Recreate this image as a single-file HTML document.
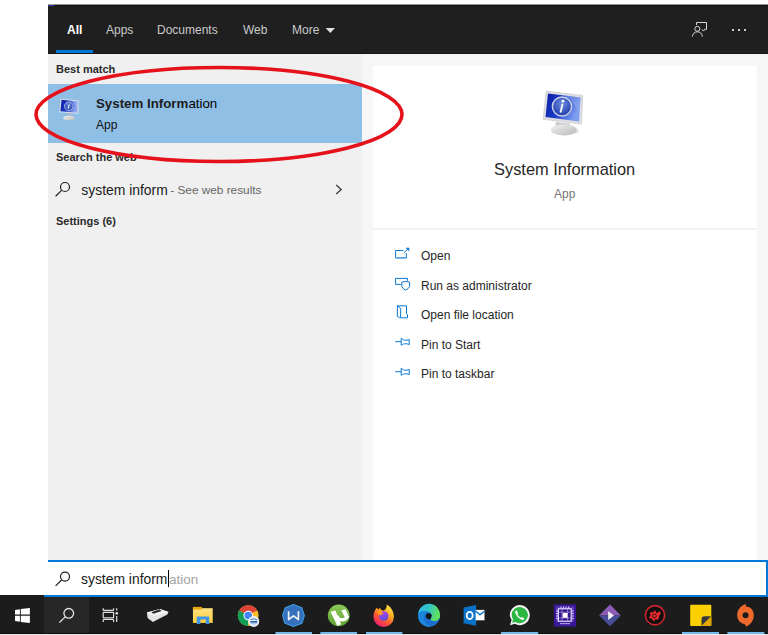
<!DOCTYPE html>
<html><head><meta charset="utf-8">
<style>
*{margin:0;padding:0;box-sizing:border-box}
html,body{width:768px;height:635px;overflow:hidden;background:#fff;font-family:"Liberation Sans",sans-serif;position:relative}
.a{position:absolute}
.t{position:absolute;white-space:pre;line-height:1}
svg{position:absolute;overflow:visible}
</style></head><body>

<!-- top tab bar -->
<div class="a" style="left:48px;top:4px;width:720px;height:50px;background:#1f1f1f"></div>
<div class="a" style="left:48px;top:4px;width:720px;height:1px;background:#9a9a9a"></div>
<div class="a" style="left:48px;top:5px;width:720px;height:1px;background:#0e0e0e"></div>
<div class="a" style="left:48px;top:5px;width:6px;height:1px;background:#3b3bb8"></div>
<div class="a" style="left:48px;top:53px;width:720px;height:1px;background:#161616"></div>
<div class="t" style="left:67px;top:24px;font-size:12px;font-weight:bold;color:#fff">All</div>
<div class="t" style="left:106px;top:24px;font-size:12px;color:#c9c9c9">Apps</div>
<div class="t" style="left:157px;top:24px;font-size:12px;color:#c9c9c9">Documents</div>
<div class="t" style="left:243px;top:24px;font-size:12px;color:#c9c9c9">Web</div>
<div class="t" style="left:292px;top:24px;font-size:12px;color:#c9c9c9">More</div>
<svg style="left:326px;top:28px" width="9" height="5"><path d="M-0.4 0.1H9L4.3 5Z" fill="#e0e0e0"/></svg>
<div class="a" style="left:56px;top:50px;width:37px;height:3px;background:#0078d7"></div>

<div class="a" style="left:732px;top:29px;width:2px;height:2px;background:#ccc"></div>
<div class="a" style="left:738px;top:29px;width:2px;height:2px;background:#ccc"></div>
<div class="a" style="left:744px;top:29px;width:2px;height:2px;background:#ccc"></div>

<!-- left panel -->
<div class="a" style="left:48px;top:54px;width:314px;height:506px;background:#f0f0f0"></div>
<!-- right area -->
<div class="a" style="left:362px;top:54px;width:406px;height:506px;background:#f6f6f6"></div>
<div class="a" style="left:373px;top:66px;width:384px;height:494px;background:#fff"></div>
<div class="a" style="left:373px;top:228px;width:384px;height:2px;background:#f3f3f3"></div>

<!-- search box -->
<div class="a" style="left:48px;top:560px;width:720px;height:2px;background:#0078d7"></div>
<div class="a" style="left:766px;top:560px;width:2px;height:37px;background:#0078d7"></div>

<!-- taskbar -->
<div class="a" style="left:0;top:595px;width:768px;height:40px;background:#1c1c1c"></div>
<div class="a" style="left:44px;top:597px;width:45px;height:38px;background:#272727"></div>
<div class="a" style="left:44px;top:595px;width:724px;height:2px;background:#0078d7"></div>


<!-- left panel text -->
<div class="t" style="left:56px;top:64px;font-size:11px;font-weight:bold;color:#2a2a2a">Best match</div>
<div class="a" style="left:48px;top:84px;width:314px;height:59px;background:#90bfe6"></div>
<div class="t" style="left:96px;top:97px;font-size:13.3px;color:#000"><b style="color:#1e1e1e">System Inform</b>ation</div>
<div class="t" style="left:96px;top:119px;font-size:12px;color:#111">App</div>
<div class="t" style="left:56px;top:152px;font-size:11px;font-weight:bold;color:#2a2a2a">Search the web</div>
<div class="t" style="left:81.3px;top:184px;font-size:13.9px;color:#1a1a1a">system inform</div>
<div class="t" style="left:170.3px;top:185px;font-size:11.8px;color:#666">- See web results</div>
<div class="t" style="left:56px;top:216px;font-size:11px;font-weight:bold;color:#2a2a2a">Settings (6)</div>

<!-- right card text -->
<div class="t" style="left:494px;top:161px;font-size:16.4px;color:#262626">System Information</div>
<div class="t" style="left:554px;top:188px;font-size:12px;color:#767676">App</div>
<div class="t" style="left:421px;top:250px;font-size:12px;color:#262626">Open</div>
<div class="t" style="left:421px;top:280px;font-size:12px;color:#262626">Run as administrator</div>
<div class="t" style="left:421px;top:309px;font-size:12px;color:#262626">Open file location</div>
<div class="t" style="left:421px;top:339px;font-size:12px;color:#262626">Pin to Start</div>
<div class="t" style="left:421px;top:368px;font-size:12px;color:#262626">Pin to taskbar</div>

<!-- search box text -->
<div class="a" style="left:168px;top:570px;width:1px;height:17px;background:#000"></div>
<div class="t" style="left:81px;top:573px;font-size:13.9px;color:#1a1a1a">system inform</div>
<div class="t" style="left:169px;top:573px;font-size:13.5px;color:#a4a4a4">ation</div>

<svg style="left:0;top:0" width="768" height="635" viewBox="0 0 768 635">
<defs>
<linearGradient id="scr" x1="0" y1="0" x2="1" y2="0.3"><stop offset="0" stop-color="#0b1aa8"/><stop offset="0.55" stop-color="#1d3fc4"/><stop offset="1" stop-color="#8fa8f0"/></linearGradient>
<linearGradient id="scr2" x1="0" y1="0" x2="1" y2="0.4"><stop offset="0" stop-color="#0a1aa0"/><stop offset="0.5" stop-color="#1a3cc8"/><stop offset="1" stop-color="#7e9ef0"/></linearGradient>
<radialGradient id="cir" cx="0.5" cy="0.35" r="0.65"><stop offset="0" stop-color="#6d8de0"/><stop offset="1" stop-color="#1d3aa8"/></radialGradient>
<linearGradient id="stand" x1="0" y1="0" x2="1" y2="1"><stop offset="0" stop-color="#f4f4f4"/><stop offset="1" stop-color="#b8b8b8"/></linearGradient>
<linearGradient id="edge" x1="0" y1="1" x2="1" y2="0"><stop offset="0" stop-color="#0c59a8"/><stop offset="0.5" stop-color="#1f8ad9"/><stop offset="1" stop-color="#5fd55e"/></linearGradient>
<linearGradient id="ff" x1="0.8" y1="0" x2="0.2" y2="1"><stop offset="0" stop-color="#ffe84a"/><stop offset="0.35" stop-color="#ffb020"/><stop offset="0.62" stop-color="#ff5a2e"/><stop offset="0.92" stop-color="#f0206e"/></linearGradient>
<linearGradient id="fold" x1="0" y1="0" x2="0" y2="1"><stop offset="0" stop-color="#ffe082"/><stop offset="1" stop-color="#ffcf3e"/></linearGradient>
<linearGradient id="ffp" x1="0.3" y1="0" x2="0.5" y2="1"><stop offset="0" stop-color="#b040f0"/><stop offset="1" stop-color="#5a50d8"/></linearGradient>
<linearGradient id="edg2" x1="0" y1="0" x2="1" y2="0.3"><stop offset="0" stop-color="#34b8f0"/><stop offset="0.5" stop-color="#2ec4c8"/><stop offset="1" stop-color="#62e05a"/></linearGradient>
<linearGradient id="ut" x1="0" y1="0" x2="0" y2="1"><stop offset="0" stop-color="#8cc85a"/><stop offset="1" stop-color="#5ea52e"/></linearGradient>
</defs>

<!-- small sysinfo icon -->
<polygon points="60.6,98.7 78.8,100.6 78.5,113.8 59.2,112.2" fill="#d8dde6"/>
<polygon points="61.6,99.8 77.7,101.6 77.4,112.8 60.4,111.3" fill="url(#scr)"/>
<polygon points="68,100.5 77.7,101.6 77.5,108 72,101.5" fill="#b0c4f8" opacity="0.5"/>
<circle cx="68.8" cy="106.2" r="4.3" fill="url(#cir)" stroke="#c8d2ee" stroke-width="0.8"/>
<path d="M69.3 103.8v0.6M68.9 105.3l-0.5 3.4" stroke="#fff" stroke-width="1"/>
<path d="M67 113 L72 113.5 L72.3 115.5 L66.8 115.5Z" fill="#a9b9cc"/>
<ellipse cx="69" cy="118" rx="5.8" ry="2.3" fill="url(#stand)"/>

<!-- big sysinfo icon -->
<polygon points="546.1,91.1 582.7,95.5 581.4,124.1 543.1,119.3" fill="#dcdde2" stroke="#c2c4cc" stroke-width="0.6"/>
<polygon points="548,93.5 580.5,97.5 579,121.5 545.5,117" fill="url(#scr2)"/>
<polygon points="561,95.1 580.5,97.5 579.6,112 570,99" fill="#9db4f4" opacity="0.45"/>
<circle cx="562" cy="106.5" r="9.6" fill="url(#cir)" stroke="#c9d0e6" stroke-width="1.5"/>
<circle cx="562.9" cy="101.2" r="1.4" fill="#fff"/>
<path d="M562.4 104.4 L560.7 111.8" stroke="#f2f2f2" stroke-width="2" stroke-linecap="round"/>
<path d="M556 122 L570 123.8 L571 128 L555 127Z" fill="#c9c9c9"/>
<ellipse cx="563.8" cy="129.9" rx="13" ry="5.6" fill="url(#stand)"/>
<ellipse cx="574" cy="131" rx="5" ry="2.5" fill="#c8c8c8" opacity="0.5"/>

<!-- red ellipse -->
<ellipse cx="219" cy="114.5" rx="183" ry="47" fill="none" stroke="#e5121c" stroke-width="3.6"/>

<!-- search icons -->
<g fill="none" stroke="#1e1e1e" stroke-width="1.2">
<circle cx="65" cy="187" r="4.5"/><path d="M61.6 190.4L55.6 196.3"/>
<circle cx="65" cy="576.6" r="4.5"/><path d="M61.6 580L55.6 585.9"/>
<path d="M336.2 185L341.2 189.5L336.2 194" stroke="#333"/>
</g>
<g fill="none" stroke="#e2e2e2" stroke-width="1.3">
<circle cx="68.75" cy="613.35" r="4.85"/><path d="M65.2 616.9L59.4 622.5"/>
</g>

<!-- feedback icon -->
<g fill="none" stroke="#d6d6d6" stroke-width="1">
<path d="M696.5 25V22.5H706.5V29.3H704.5"/><path d="M702 29.3l1.5 1.8l1.3-1.7"/>
<circle cx="697.3" cy="28.8" r="2.5"/><path d="M692.4 36.6C692.8 33.5 694.7 31.8 697.4 31.8S702 33.5 702.4 36.6"/>
</g>

<!-- action icons -->
<g fill="none" stroke="#0a78d6" stroke-width="1">
<path d="M403.4 250.5H395.6V257.8H406.4V253.3"/><path d="M404.2 252.6L407.8 249"/>
<path d="M400.9 284.4H395.6V278.4H407.5V280.7"/>
<path d="M401.8 282.1Q405.7 280.8 409.6 282.1V286.3Q408.8 288.8 405.6 290.2Q402.4 288.8 401.8 286.3Z"/>
<path d="M397.4 305.8H406.5V313.7L407.5 314.6V317.8H400.6M397.4 305.8V316.4L399.5 317.6L400.6 317.6V313L400.8 308.4L397.4 305.8"/>
<path d="M395.2 341.7H401.2M401.2 338.3V345.2M401.2 338.3C402.5 338.3 402.8 340.2 404.5 340.2H407C408 340.2 408.5 339.4 409.2 339.4V344.6C408.5 344.6 408 343.8 407 343.8H404.5C402.8 343.8 402.5 345.2 401.2 345.2"/>
<path d="M395.2 371.7H401.2M401.2 368.3V375.2M401.2 368.3C402.5 368.3 402.8 370.2 404.5 370.2H407C408 370.2 408.5 369.4 409.2 369.4V374.6C408.5 374.6 408 373.8 407 373.8H404.5C402.8 373.8 402.5 375.2 401.2 375.2"/>
</g>
<path d="M406.3 248.1H408.9V250.7Z" fill="#0a78d6" stroke="#0a78d6" stroke-width="0.8"/>
<path d="M395.6 257.8H406.4" stroke="#5aa6e6" stroke-width="1.6"/>

<!-- taskbar icons -->
<g fill="#fff">
<polygon points="15,609.9 19.9,609.2 19.9,614.6 15,614.6"/>
<polygon points="20.8,609 29.9,607.9 29.9,614.6 20.8,614.6"/>
<polygon points="15,615.8 19.9,615.8 19.9,621.8 15,621"/>
<polygon points="20.8,615.8 29.9,615.8 29.9,622.9 20.8,621.9"/>
</g>
<g fill="none" stroke="#e0e0e0" stroke-width="1.2">
<path d="M103.2 608.2V609.7Q103.2 610.4 103.9 610.4H112.9Q113.6 610.4 113.6 609.7V608.2"/>
<rect x="103.2" y="612.3" width="10.4" height="5.5" rx="0.6"/>
<path d="M103.2 622V620.2Q103.2 619.5 103.9 619.5H112.9Q113.6 619.5 113.6 620.2V622"/>
<path d="M116.7 608.2V610.5M116.7 616V622"/>
</g>
<rect x="115.6" y="612.2" width="2.3" height="2.2" fill="#f0f0f0"/>
<!-- printer -->
<polygon points="146.9,612.4 160,609.1 168.5,612 167.4,614.6 152.8,621.9 147.6,617.9" fill="#e4e4e4"/>
<polygon points="146.9,612.4 160,609.1 168.5,612 154,616" fill="#f6f6f6"/>
<polygon points="151.2,612.3 159.6,609.2 161.6,610.9 153.6,613.8" fill="#2e2e2e"/>
<!-- explorer -->
<rect x="192.95" y="606.95" width="8.9" height="2.8" fill="#e8a800"/>
<rect x="192.95" y="608.2" width="19.75" height="14.7" fill="url(#fold)"/>
<rect x="192.95" y="606.95" width="8.9" height="2.6" fill="#e9a90a"/>
<path d="M196.75 623.9V617.5Q196.75 616.5 197.75 616.5H208.2Q209.2 616.5 209.2 617.5V623.9H205.9V619.6H200.4V623.9Z" fill="#3d97e6"/>
<!-- chrome -->
<circle cx="248.2" cy="615.6" r="10.4" fill="#fbc02d"/>
<path d="M248.2 615.6L239.2 610.4A10.4 10.4 0 0 1 257.2 610.4Z" fill="#db4437"/>
<path d="M248.2 615.6L239.2 610.4A10.4 10.4 0 0 0 248.2 626Z" fill="#0f9d58"/>
<circle cx="248.2" cy="615.6" r="4.8" fill="#fff"/>
<circle cx="248.2" cy="615.6" r="3.8" fill="#4285f4"/>
<circle cx="253.75" cy="621.4" r="5.5" fill="#f2f2f2"/>
<circle cx="253.75" cy="621.4" r="4.5" fill="#e4eef8"/>
<path d="M250.5 619.8Q253.75 617.5 257 619.8" stroke="#3a7ac8" stroke-width="1" fill="none"/>
<rect x="250.3" y="621" width="7" height="1.6" fill="#2a5aa8"/>
<rect x="250.8" y="623.3" width="6" height="0.9" fill="#8ab4e0"/>
<!-- W -->
<polygon points="293.5,604.6 301.7,607.8 304.4,615.5 302,623.2 293.5,626.4 284.6,622.9 282.6,615.1 285.3,607.8" fill="#3570bd" stroke="#3d9ee0" stroke-width="1.1" stroke-linejoin="round"/>
<path d="M288.6 611.2V619.6L293.5 615.8L298.4 619.6V611.2" fill="none" stroke="#f4f4f4" stroke-width="1.7" stroke-linejoin="round"/>
<!-- utorrent -->
<circle cx="338.75" cy="615.4" r="10.9" fill="url(#ut)"/>
<path d="M330.6 611.8L335.4 610.6L341.2 624.2L337.3 626Z" fill="#fff"/>
<path d="M341.4 610.2L345.5 609.2L349 617L345.5 619Z" fill="#fff"/>
<path d="M336.5 617.5Q338.5 622 343 621.5Q347 621 349 617L346.5 615.8Q345 618 342 618.2Q339 618.2 338 614.5Z" fill="#fff"/>
<!-- firefox -->
<path d="M376.6 607.8C374.6 610.5 373.5 613.5 373.5 616.8A10.2 10.2 0 0 0 393.9 616.8C393.9 611.5 391 606.5 386.6 604.4C387.2 607 385.8 609.5 383.5 610.8L381 609.8L379.8 607.7L378.4 609.6Z" fill="url(#ff)"/>
<circle cx="383.7" cy="616" r="4.8" fill="url(#ffp)"/>
<path d="M376.5 612.5Q380 610.5 384 613.2Q381.5 614.2 380.5 615.5Q378 614 376.5 612.5Z" fill="#ff9a1f"/>
<!-- edge -->
<circle cx="429.1" cy="615.7" r="11" fill="#1a6fcf"/>
<path d="M418.2 613.5A11 11 0 0 1 440.1 615.5C440.1 619 437.5 621 434 621C431 621 429.6 619.5 430.9 618C432.3 616.5 432.2 612.5 428 611.8C423.5 611 419.8 612 418.2 613.5Z" fill="url(#edg2)"/>
<path d="M418.3 614C420 610.5 426 610 428.5 612C424 612.5 422.5 618 425.5 622.5C427 624.5 429 625.8 431 626.6A11 11 0 0 1 418.3 614Z" fill="#1b86dc"/>
<path d="M425.8 615.5C426.2 612.5 431 612.5 431.8 615.5C431.5 617 430.5 617.5 430.9 619C428 620 425.5 618 425.8 615.5Z" fill="#141414"/>
<!-- outlook -->
<path d="M463.6 607.5L476.1 605V625.8L463.6 623.2Z" fill="#0a72c9"/>
<rect x="475.6" y="609.9" width="8.9" height="10.4" fill="#fff"/>
<path d="M475.6 611L480 614.8L484.5 611" stroke="#0a72c9" stroke-width="1.4" fill="none"/>
<ellipse cx="469.7" cy="615.4" rx="3" ry="3.6" fill="none" stroke="#fff" stroke-width="1.8"/>
<!-- whatsapp -->
<path d="M510 625.2L511.6 620Q509.8 617.5 509.8 615.1A10 10 0 1 1 514.8 623.8Z" fill="#f4f4f4"/>
<path d="M512 622.8L513.1 619.6Q511.7 617.5 511.7 615.1A8.1 8.1 0 1 1 515.4 621.9Z" fill="#2cb742"/>
<path d="M515.8 610.5Q514.8 611.5 515.5 613.5Q517 617.5 521 619.5Q523 620.4 524 619.3L524.3 618.3L522 617L520.9 617.8Q518.5 616.5 517.3 614.3L518 613.2L516.8 610.6Z" fill="#fff"/>
<!-- cpu -->
<rect x="553.9" y="604.4" width="22.1" height="22.2" fill="#3a1698"/>
<rect x="556" y="606.5" width="18" height="15.5" fill="#9a80e0" opacity="0.35"/>
<path d="M556 611h2.2M556 613.5h2.2M556 616h2.2M556 618.5h2.2M571.5 611h2.2M571.5 613.5h2.2M571.5 616h2.2M571.5 618.5h2.2M561 606.4v2.2M563.5 606.4v2.2M566 606.4v2.2M568.5 606.4v2.2" stroke="#d8ccff" stroke-width="0.9"/>
<rect x="558.4" y="608.8" width="12.8" height="12.4" fill="#2c1080" stroke="#e4dcff" stroke-width="1.2"/>
<path d="M559 612.2h11.8M559 618h11.8M562 609v11.8M567.6 609v11.8" stroke="#a894e8" stroke-width="0.8"/>
<rect x="562.7" y="613" width="4.8" height="4.8" fill="#fff"/>
<rect x="560" y="623" width="10" height="1.2" fill="#c8b8f0" opacity="0.8"/>
<!-- stremio diamond -->
<path d="M599.1 615.4L610 604.5L620.9 615.4Z" fill="#8d5cb6"/>
<path d="M599.1 615.4L610 626.3L620.9 615.4Z" fill="#474e95"/>
<path d="M608.2 611.2V620L614 615.4Z" fill="#f4f4f4"/>
<!-- driver booster -->
<circle cx="655" cy="615.2" r="9.6" fill="#0f0f0f" stroke="#c8242a" stroke-width="1.7"/>
<path d="M654.20 610.60 L655.55 610.78 L656.10 612.51 L656.89 613.11 L658.70 613.20 L659.22 614.45 L658.00 615.80 L657.87 616.78 L658.70 618.40 L657.88 619.48 L656.10 619.09 L655.18 619.47 L654.20 621.00 L652.85 620.82 L652.30 619.09 L651.51 618.49 L649.70 618.40 L649.18 617.15 L650.40 615.80 L650.53 614.82 L649.70 613.20 L650.52 612.12 L652.30 612.51 L653.22 612.13Z" fill="#ec2a30"/>
<circle cx="654.4" cy="615.9" r="1.9" fill="none" stroke="#0f0f0f" stroke-width="0.8"/>
<path d="M656.8 613.5L659.5 611L660.5 612.8L661.2 613.5L659.8 614.5Q659.5 618 656 620.5Q658.5 617 657.5 614.8Z" fill="#ec2a30"/>
<!-- sticky notes -->
<rect x="690.2" y="604.8" width="21.1" height="21.2" rx="1" fill="#fcd000"/>
<path d="M701.5 626V619Q701.5 616.2 704.3 616.2H711.3L701.5 626Z" fill="#3a3a3a"/>
<path d="M701.6 626L711.3 616.3V625Q711.3 626 710.3 626Z" fill="#e0a800"/>
<!-- origin -->
<path d="M746 604C740 606 737.2 610 737.2 615.2C737.2 620 740.5 623.5 744.5 623.9L746.2 626.4C750.5 624.5 753.8 620.5 753.8 615.2C753.8 610 750 606.6 745.8 606.6Z" fill="#ee6a2c"/>
<circle cx="745.5" cy="615.2" r="3" fill="#1c1c1c"/>

<!-- taskbar underlines -->
<rect x="0" y="633" width="768" height="1" fill="#0c0c0c"/><rect x="0" y="634" width="768" height="1" fill="#e8e8e8"/>
<g fill="#76b9ed">
<rect x="275.5" y="632" width="36.5" height="2"/>
<rect x="320.4" y="632" width="36.6" height="2"/>
<rect x="366" y="632" width="36.4" height="2"/>
<rect x="501" y="632" width="37.2" height="2"/>
<rect x="682" y="632" width="37" height="2"/>
<rect x="727.4" y="632" width="37" height="2"/>
</g>
</svg>
</body></html>
